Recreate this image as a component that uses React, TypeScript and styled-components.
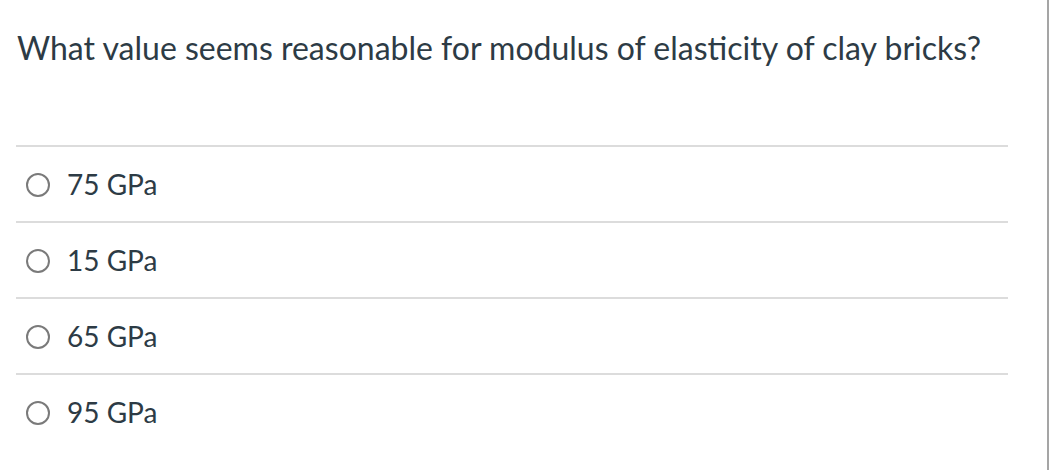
import React from "react";
import styled, { createGlobalStyle } from "styled-components";

const Global = createGlobalStyle`
  html, body { margin: 0; padding: 0; background: #fff; }
  body { font-family: Lato, "Open Sans", sans-serif; color: #2d3b45; }
`;

const Page = styled.div`
  width: 1056px;
  height: 470px;
  display: flex;
  box-sizing: border-box;
`;

const Main = styled.div`
  width: 1047px;
  box-sizing: border-box;
  padding: 0 39px 0 16px;
`;

const RightEdge = styled.div`
  width: 2px;
  background: #a5a5a5;
`;

const Question = styled.div`
  font-size: 32px;
  line-height: 1.2;
  padding: 29px 0 0 1px;
  height: 145px;
  box-sizing: border-box;
`;

const List = styled.div`
  display: flex;
  flex-direction: column;
`;

const Option = styled.label`
  display: flex;
  align-items: center;
  gap: 17px;
  height: 76px;
  box-sizing: border-box;
  border-top: 2px solid #dcdcdc;
  padding: 0 0 0 10px;
  font-size: 28px;
`;

const Radio = styled.span`
  width: 24px;
  height: 24px;
  margin-top: 1px;
  border-radius: 50%;
  border: 2px solid #7a7a7a;
  box-sizing: border-box;
  flex: none;
`;

const options = ["75 GPa", "15 GPa", "65 GPa", "95 GPa"];

export default function App() {
  return (
    <>
      <Global />
      <Page>
        <Main>
          <Question>What value seems reasonable for modulus of elasticity of clay bricks?</Question>
          <List>
            {options.map((o) => (
              <Option key={o}>
                <Radio />
                <span>{o}</span>
              </Option>
            ))}
          </List>
        </Main>
        <RightEdge />
      </Page>
    </>
  );
}
